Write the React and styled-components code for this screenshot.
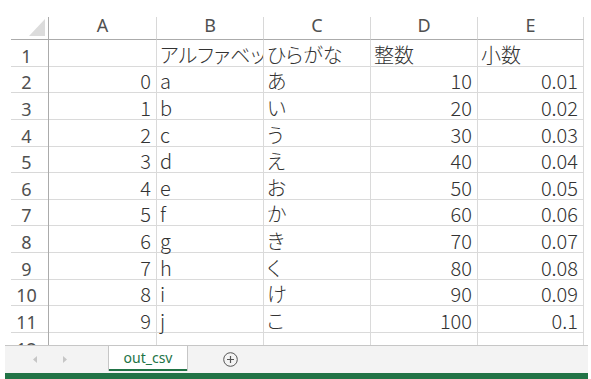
import React from 'react'
import styled, { createGlobalStyle } from 'styled-components'

const GlobalStyle = createGlobalStyle`
  html, body { margin: 0; padding: 0; background: #fff; }
  body { font-family: "Noto Sans CJK JP", "Noto Sans", sans-serif; }
`

const columns = ['A', 'B', 'C', 'D', 'E']

const header = ['', 'アルファベット', 'ひらがな', '整数', '小数']
const letters = ['a', 'b', 'c', 'd', 'e', 'f', 'g', 'h', 'i', 'j']
const kana = ['あ', 'い', 'う', 'え', 'お', 'か', 'き', 'く', 'け', 'こ']

const rows = letters.map((l, i) => [
    String(i),
    l,
    kana[i],
    String((i + 1) * 10),
    String(Number(((i + 1) / 100).toFixed(2))),
])

const rightAligned = [true, false, false, true, true]

const App = () => {
    return (
        <>
            <GlobalStyle />
            <Window>
                <Sheet>
                    <Grid>
                        <Corner>
                            <svg width="16" height="17" viewBox="0 0 16 17">
                                <polygon points="16,0 16,17 0,17" fill="#dcdcdc" />
                            </svg>
                        </Corner>
                        {columns.map(c => <ColHead key={c}>{c}</ColHead>)}

                        <RowHead>1</RowHead>
                        {header.map((h, i) => <Cell key={'h' + i}>{h}</Cell>)}

                        {rows.map((r, ri) => (
                            <React.Fragment key={ri}>
                                <RowHead>{ri + 2}</RowHead>
                                {r.map((v, ci) => (
                                    <Cell key={ci} $right={rightAligned[ci]}>{v}</Cell>
                                ))}
                            </React.Fragment>
                        ))}

                        <RowHead>12</RowHead>
                        {columns.map(c => <Cell key={'p' + c} />)}
                    </Grid>
                </Sheet>
                <TabBar>
                    <Nav>
                        <Arrow viewBox="0 0 4 7"><polygon points="4,0 4,7 0,3.5" /></Arrow>
                        <Arrow viewBox="0 0 4 7"><polygon points="0,0 0,7 4,3.5" /></Arrow>
                    </Nav>
                    <Tab>out_csv</Tab>
                    <AddSheet>
                        <svg width="15" height="15" viewBox="0 0 15 15">
                            <circle cx="7.5" cy="7.5" r="6.8" fill="none" stroke="#555" strokeWidth="1" />
                            <path d="M7.5 4v7M4 7.5h7" stroke="#555" strokeWidth="1.2" />
                        </svg>
                    </AddSheet>
                </TabBar>
                <StatusBar />
            </Window>
        </>
    )
}

export default App

const Window = styled.div`
width:583px;
height:379px;
margin-left:5px;
display:flex;
flex-direction:column;
overflow:hidden;
`

const Sheet = styled.div`
flex:1;
min-height:0;
overflow:hidden;
padding-top:17px;
`

const Grid = styled.div`
display:grid;
grid-template-columns:44px 108px 107px 107px 107px 106px;
grid-template-rows:23px;
grid-auto-rows:26.64px;
`

const Corner = styled.div`
box-sizing:border-box;
border-right:1px solid #ababab;
background:linear-gradient(#ababab,#ababab) no-repeat 6px 100% / calc(100% - 6px) 1px;
display:flex;
justify-content:flex-end;
align-items:flex-end;
padding:0 3px 4px 0;
`

const ColHead = styled.div`
box-sizing:border-box;
border-right:1px solid #d8d8d8;
border-bottom:1px solid #ababab;
text-align:center;
font-family:"Noto Sans","Liberation Sans",sans-serif;
font-size:18px;
line-height:16px;
color:#505050;
`

const RowHead = styled.div`
box-sizing:border-box;
border-right:1px solid #ababab;
background:linear-gradient(#d8d8d8,#d8d8d8) no-repeat 6px 100% / calc(100% - 6px) 1px;
display:flex;
justify-content:center;
align-items:flex-end;
padding-bottom:2px;
font-family:"Noto Sans","Liberation Sans",sans-serif;
font-size:18px;
line-height:18px;
color:#505050;
`

const Cell = styled.div`
box-sizing:border-box;
border-right:1px solid #dadada;
border-bottom:1px solid #dadada;
display:flex;
align-items:flex-end;
justify-content:${p => (p.$right ? 'flex-end' : 'flex-start')};
padding:0 5px 1px 3px;
overflow-x:clip;
white-space:nowrap;
font-size:20px;
line-height:20px;
font-weight:300;
font-feature-settings:"palt";
color:#333;
`

const TabBar = styled.div`
height:27px;
flex-shrink:0;
border-top:1px solid #c6c6c6;
background:#f3f3f3;
display:flex;
align-items:center;
`

const Nav = styled.div`
width:103px;
display:flex;
align-items:center;
gap:26px;
padding-left:28px;
box-sizing:border-box;
margin-top:-1px;
`

const Arrow = styled.svg`
width:4px;
height:7px;
fill:#c6c6c6;
`

const Tab = styled.div`
align-self:flex-start;
box-sizing:border-box;
width:80px;
height:25px;
background:#fff;
border-left:1px solid #c6c6c6;
border-right:1px solid #c6c6c6;
box-shadow:inset 0 -2px 0 #217346;
display:flex;
align-items:center;
justify-content:center;
padding-bottom:2px;
font-family:"Noto Sans","Liberation Sans",sans-serif;
font-size:14px;
color:#217346;
`

const AddSheet = styled.div`
margin-left:35px;
display:flex;
align-items:center;
`

const StatusBar = styled.div`
height:6px;
flex-shrink:0;
background:#217346;
`
